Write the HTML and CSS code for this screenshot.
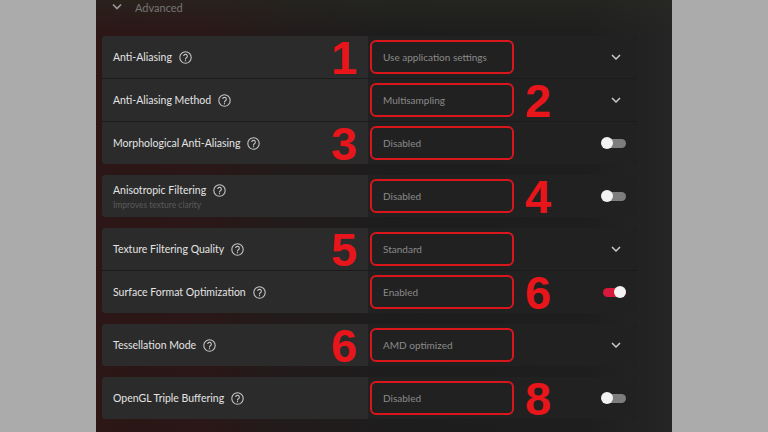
FILE: index.html
```html
<!DOCTYPE html>
<html>
<head>
<meta charset="utf-8">
<link rel="stylesheet" href="styles.css">
</head>
<body>
<div class="panel">
  <div class="header">
    <svg class="hchev" width="10" height="7" viewBox="0 0 10 7"><polyline points="1,1.5 5,5.5 9,1.5" fill="none" stroke="#9a9a9a" stroke-width="1.6"/></svg>
    <span>Advanced</span>
  </div>
  <div class="groups">
    <div class="group">
      <div class="row">
        <div class="label"><span>Anti-Aliasing</span><svg class="help" width="13" height="13" viewBox="0 0 13 13"><circle cx="6.5" cy="6.5" r="5.7" fill="none" stroke="#c4c4c4" stroke-width="1.1"/><path d="M4.7 5.1a1.8 1.8 0 1 1 2.7 1.6c-.6.35-.9.7-.9 1.3v.4" fill="none" stroke="#c4c4c4" stroke-width="1.1"/><circle cx="6.5" cy="9.7" r=".65" fill="#c4c4c4"/></svg></div>
        <div class="value"><span class="box">Use application settings</span><svg class="chev" width="10" height="6" viewBox="0 0 10 6"><polyline points="1,1 5,5 9,1" fill="none" stroke="#c8c8c8" stroke-width="1.5"/></svg></div>
        <span class="num left">1</span>
      </div>
      <div class="row">
        <div class="label"><span>Anti-Aliasing Method</span><svg class="help" width="13" height="13" viewBox="0 0 13 13"><circle cx="6.5" cy="6.5" r="5.7" fill="none" stroke="#c4c4c4" stroke-width="1.1"/><path d="M4.7 5.1a1.8 1.8 0 1 1 2.7 1.6c-.6.35-.9.7-.9 1.3v.4" fill="none" stroke="#c4c4c4" stroke-width="1.1"/><circle cx="6.5" cy="9.7" r=".65" fill="#c4c4c4"/></svg></div>
        <div class="value"><span class="box">Multisampling</span><svg class="chev" width="10" height="6" viewBox="0 0 10 6"><polyline points="1,1 5,5 9,1" fill="none" stroke="#c8c8c8" stroke-width="1.5"/></svg></div>
        <span class="num right">2</span>
      </div>
      <div class="row">
        <div class="label"><span>Morphological Anti-Aliasing</span><svg class="help" width="13" height="13" viewBox="0 0 13 13"><circle cx="6.5" cy="6.5" r="5.7" fill="none" stroke="#c4c4c4" stroke-width="1.1"/><path d="M4.7 5.1a1.8 1.8 0 1 1 2.7 1.6c-.6.35-.9.7-.9 1.3v.4" fill="none" stroke="#c4c4c4" stroke-width="1.1"/><circle cx="6.5" cy="9.7" r=".65" fill="#c4c4c4"/></svg></div>
        <div class="value toggle-cell"><span class="box">Disabled</span><span class="toggle"><span class="knob"></span></span></div>
        <span class="num left">3</span>
      </div>
    </div>

    <div class="group">
      <div class="row">
        <div class="label stacked">
          <div class="title"><span>Anisotropic Filtering</span><svg class="help" width="13" height="13" viewBox="0 0 13 13"><circle cx="6.5" cy="6.5" r="5.7" fill="none" stroke="#c4c4c4" stroke-width="1.1"/><path d="M4.7 5.1a1.8 1.8 0 1 1 2.7 1.6c-.6.35-.9.7-.9 1.3v.4" fill="none" stroke="#c4c4c4" stroke-width="1.1"/><circle cx="6.5" cy="9.7" r=".65" fill="#c4c4c4"/></svg></div>
          <div class="sub">Improves texture clarity</div>
        </div>
        <div class="value toggle-cell"><span class="box">Disabled</span><span class="toggle"><span class="knob"></span></span></div>
        <span class="num right">4</span>
      </div>
    </div>

    <div class="group">
      <div class="row">
        <div class="label"><span>Texture Filtering Quality</span><svg class="help" width="13" height="13" viewBox="0 0 13 13"><circle cx="6.5" cy="6.5" r="5.7" fill="none" stroke="#c4c4c4" stroke-width="1.1"/><path d="M4.7 5.1a1.8 1.8 0 1 1 2.7 1.6c-.6.35-.9.7-.9 1.3v.4" fill="none" stroke="#c4c4c4" stroke-width="1.1"/><circle cx="6.5" cy="9.7" r=".65" fill="#c4c4c4"/></svg></div>
        <div class="value"><span class="box">Standard</span><svg class="chev" width="10" height="6" viewBox="0 0 10 6"><polyline points="1,1 5,5 9,1" fill="none" stroke="#c8c8c8" stroke-width="1.5"/></svg></div>
        <span class="num left">5</span>
      </div>
      <div class="row">
        <div class="label"><span>Surface Format Optimization</span><svg class="help" width="13" height="13" viewBox="0 0 13 13"><circle cx="6.5" cy="6.5" r="5.7" fill="none" stroke="#c4c4c4" stroke-width="1.1"/><path d="M4.7 5.1a1.8 1.8 0 1 1 2.7 1.6c-.6.35-.9.7-.9 1.3v.4" fill="none" stroke="#c4c4c4" stroke-width="1.1"/><circle cx="6.5" cy="9.7" r=".65" fill="#c4c4c4"/></svg></div>
        <div class="value toggle-cell"><span class="box">Enabled</span><span class="toggle on"><span class="knob"></span></span></div>
        <span class="num right">6</span>
      </div>
    </div>

    <div class="group">
      <div class="row">
        <div class="label"><span>Tessellation Mode</span><svg class="help" width="13" height="13" viewBox="0 0 13 13"><circle cx="6.5" cy="6.5" r="5.7" fill="none" stroke="#c4c4c4" stroke-width="1.1"/><path d="M4.7 5.1a1.8 1.8 0 1 1 2.7 1.6c-.6.35-.9.7-.9 1.3v.4" fill="none" stroke="#c4c4c4" stroke-width="1.1"/><circle cx="6.5" cy="9.7" r=".65" fill="#c4c4c4"/></svg></div>
        <div class="value"><span class="box">AMD optimized</span><svg class="chev" width="10" height="6" viewBox="0 0 10 6"><polyline points="1,1 5,5 9,1" fill="none" stroke="#c8c8c8" stroke-width="1.5"/></svg></div>
        <span class="num left">6</span>
      </div>
    </div>

    <div class="group">
      <div class="row">
        <div class="label"><span>OpenGL Triple Buffering</span><svg class="help" width="13" height="13" viewBox="0 0 13 13"><circle cx="6.5" cy="6.5" r="5.7" fill="none" stroke="#c4c4c4" stroke-width="1.1"/><path d="M4.7 5.1a1.8 1.8 0 1 1 2.7 1.6c-.6.35-.9.7-.9 1.3v.4" fill="none" stroke="#c4c4c4" stroke-width="1.1"/><circle cx="6.5" cy="9.7" r=".65" fill="#c4c4c4"/></svg></div>
        <div class="value toggle-cell"><span class="box">Disabled</span><span class="toggle"><span class="knob"></span></span></div>
        <span class="num right">8</span>
      </div>
    </div>
  </div>
</div>
</body>
</html>
```

FILE: styles.css
```css
html, body {
  margin: 0;
  padding: 0;
}
body {
  width: 768px;
  height: 432px;
  overflow: hidden;
  background: #ababab;
  font-family: Lato, "Liberation Sans", sans-serif;
}
.panel {
  margin-left: 96px;
  width: 576px;
  height: 432px;
  box-sizing: border-box;
  padding: 0 35px 0 6px;
  background:
    linear-gradient(180deg, rgba(40,42,34,0.55) 0, rgba(30,30,28,0) 34px),
    linear-gradient(90deg, #2c1616 0, #2a1717 20%, #221b1b 32%, #1e1d1d 50%, #1e1e1e 85%, #252525 100%);
}
.header {
  height: 14px;
  display: flex;
  align-items: center;
  padding-left: 10px;
  margin-bottom: 22px;
  color: #767676;
  font-size: 11px;
}
.hchev {
  margin-right: 13px;
  margin-top: -2px;
}
.groups {
  display: flex;
  flex-direction: column;
  gap: 11px;
}
.group {
  display: flex;
  flex-direction: column;
  gap: 1px;
  background: #1b1b1b;
  border-radius: 3px;
}
.row {
  position: relative;
  height: 42px;
  display: grid;
  grid-template-columns: 266px 1fr;
}
.row:first-child .label { border-top-left-radius: 3px; }
.row:last-child .label { border-bottom-left-radius: 3px; }
.row:first-child .value { border-top-right-radius: 3px; }
.row:last-child .value { border-bottom-right-radius: 3px; }
.label {
  background: #2b2b2b;
  display: flex;
  align-items: center;
  padding-left: 11px;
  color: #e4e4e4;
  font-size: 10.5px;
}
.label .help {
  margin-left: 7px;
  flex: none;
}
.label.stacked {
  flex-direction: column;
  align-items: flex-start;
  justify-content: center;
  padding-top: 1px;
}
.title {
  display: flex;
  align-items: center;
}
.sub {
  font-size: 8.5px;
  color: #5a5a5a;
  margin-top: 3px;
}
.value {
  background: #212121;
  display: flex;
  align-items: center;
  justify-content: space-between;
  padding: 0 16px 0 2px;
}
.value.toggle-cell {
  padding-right: 11px;
}
.box {
  box-sizing: border-box;
  width: 144px;
  height: 34px;
  border: 2px solid #d8161c;
  border-radius: 6px;
  display: flex;
  align-items: center;
  padding-left: 11px;
  color: #8a8a8a;
  font-size: 10px;
}
.toggle {
  position: relative;
  width: 25px;
  height: 12px;
  display: flex;
  align-items: center;
}
.toggle::before {
  content: "";
  display: block;
  margin-left: 2px;
  width: 23px;
  height: 9px;
  border-radius: 5px;
  background: #7d7d7d;
}
.toggle.on::before {
  background: #d51a3c;
}
.knob {
  position: absolute;
  left: 0;
  top: 0;
  width: 12px;
  height: 12px;
  border-radius: 50%;
  background: #f2f2f2;
}
.toggle.on .knob {
  left: 13px;
}
.num {
  position: absolute;
  top: -4px;
  width: 30px;
  height: 52px;
  line-height: 52px;
  text-align: center;
  font-family: "Liberation Sans", Arial, sans-serif;
  font-weight: bold;
  font-size: 47px;
  color: #e8151b;
  z-index: 1;
}
.num.left {
  left: 227px;
}
.num.right {
  left: 421px;
}
```
